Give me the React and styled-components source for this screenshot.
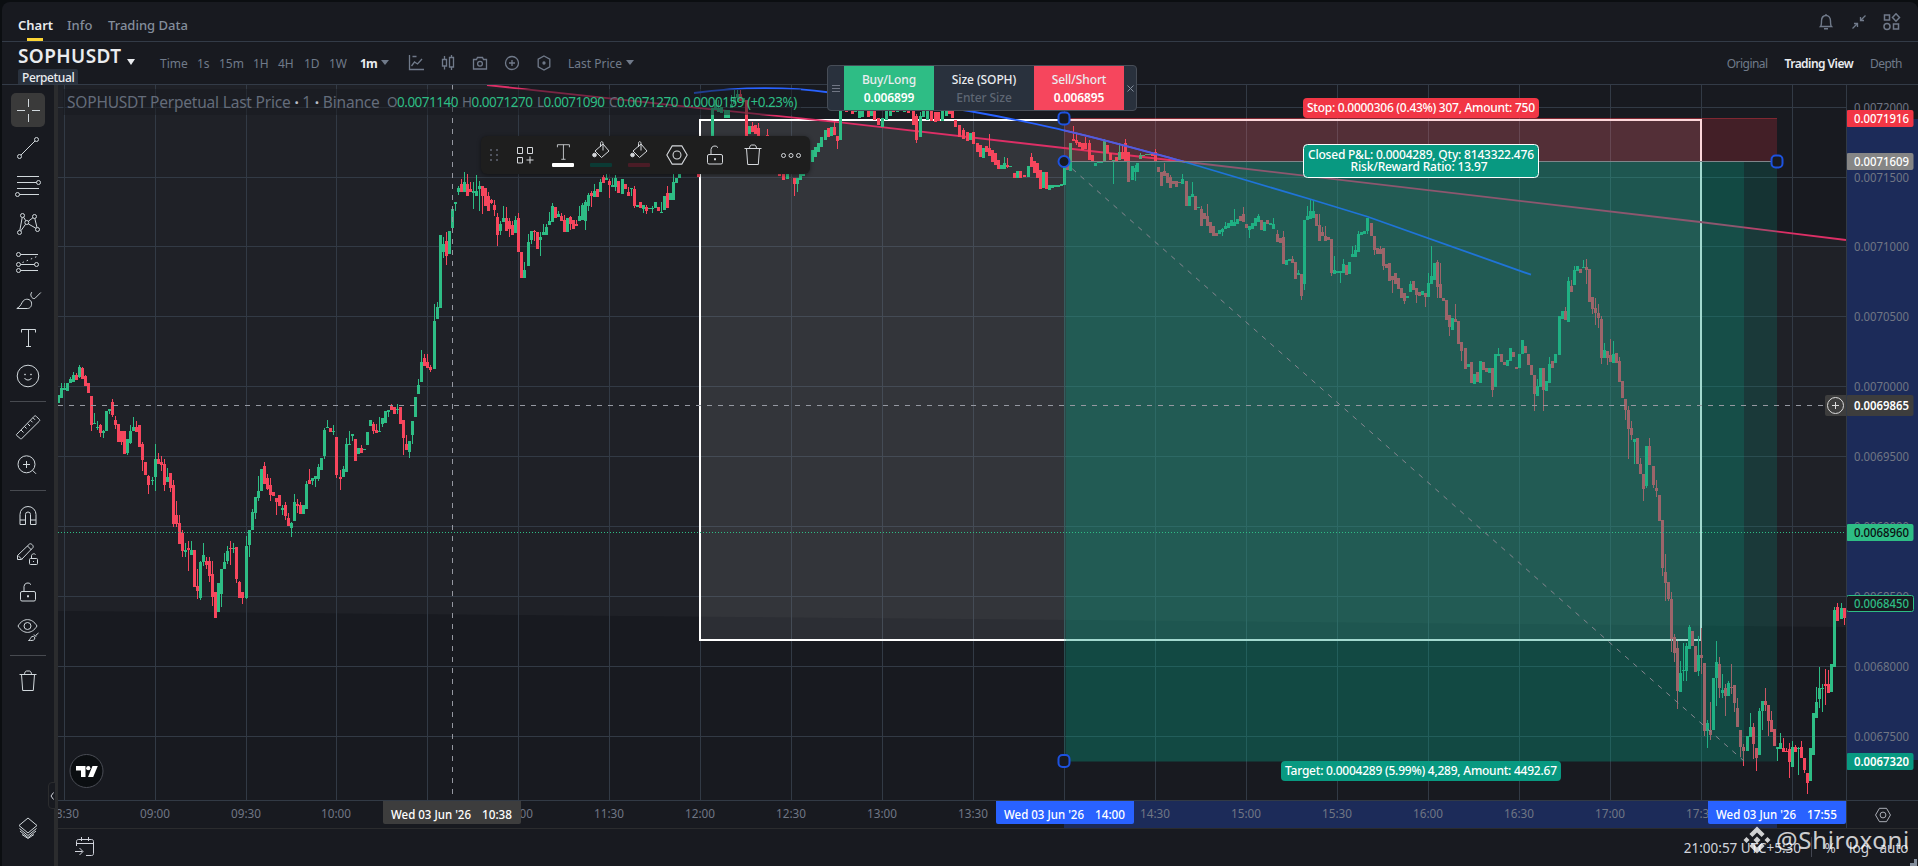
import styled, { createGlobalStyle } from "styled-components";

// x, open, close, high, low (high and low fall back to the body)
const CANDLES = `
58 403 395,61 398 388 383,64 390 388 383,67 391 383,70 383 379 377,73 382 375 372,76 375 380 373,79 377 367 365 378,82 368 379 367,85 376 386 375,
88 383 393,91 396 425 396 431,94 424 423 413,97 428 427 421 430,100 425 433 424 437,103 433 431 430 438,106 431 411,109 411 409 409 414,112 402 415 399 417,115 420 425 416 429,
118 424 442,121 431 442 431 445,124 431 454,127 453 439 439 455,130 443 431 425 444,133 431 427 417,136 427 432 421,139 425 447,142 444 460 442 471,145 462 475,
148 476 485 475 494,152 481 480 477 485,155 477 459 444 491,158 459 464 453,161 462 465 456 471,164 464 485 459 491,167 482 477 468,170 473 488 473 492,173 485 524 480 527,176 515 524 501 527,
179 523 544 515,182 533 551 530 557,185 552 550 543 557,188 548 550 541 571,191 555 550 541,194 550 587,197 586 591 569 599,200 598 562 561 600,203 562 555 543 566,206 561 565 557 569,
209 561 576 557 582,212 574 597 561 606,215 592 618,218 612 583,221 594 569 569 607,224 569 562 553,227 561 551 546 564,230 548 549 541 565,233 549 548 543 553,236 547 579 547 583,
239 582 598 581,242 592 598 592 604,246 598 546 536 599,249 545 530 530 557,252 530 512 509,255 513 497 497 519,258 498 491 476 501,261 491 469,264 466 484 462,267 478 489 474 490,
270 485 495 478 501,273 492 496,276 498 502 498 515,279 495 506,282 510 508 505 515,285 505 516 502 520,288 518 526 513,291 528 523 522 537,294 521 502 494,297 504 506 499 513,
300 505 514 502,303 514 505,306 509 484 481,309 480 484 469,312 481 478 478 485,315 479 476 476 487,318 479 467 464 481,321 470 458,324 456 430 428 459,327 428 427 420,
330 428 432,333 432 431 425 435,336 437 475 437 478,340 477 479 470 490,343 477 469 466,346 472 444 438,349 445 444 431,352 436 434 434 441,355 439 461,358 454 448,
361 448 453 445,364 450 449,367 445 432,370 426 420,373 424 431 422 434,376 430 433 424,379 432 431 417,382 424 418 418 427,385 423 411,388 412 410 410 417,
391 406 410 404,394 407 414,397 410 409 404 414,400 407 424,403 420 438 420 455,406 444 450 435,409 452 441 441 458,412 435 421 421 444,415 417 397,418 394 385 379,
421 382 362 350,424 358 366 354,427 362 368 354,430 367 370 365 372,434 369 321 304,437 319 307 302,440 308 235,443 252 244 237 258,446 241 256 232 265,449 254 231,
452 228 209 209 233,455 204 202 202 211,458 192 188 186 195,461 184 192 179,464 192 182 172,467 184 196 174,470 189 192 182,473 193 191 182 209,476 196 191 175,479 189 186 181 211,
482 186 196 186 214,485 188 206,488 196 211 192,491 200 203 199 204,494 205 210 200 216,497 217 235 213 246,500 231 224 221 235,503 222 218 206,506 218 231 207,509 221 229 218 237,
512 225 235 221,515 233 220 216,518 218 252 213,521 252 278,524 278 270 262,528 266 242 234,531 240 231 231 244,534 231 232 230 241,537 232 249,540 240 237 232 256,
543 235 232 224,546 235 227 224,549 225 221 212,552 222 206 203,555 207 218,558 217 214 211,561 216 221 213,564 220 232 215,567 232 218,570 217 224 216 230,
573 220 229,576 224 226 220,579 221 216 206,582 220 205 203,585 221 202 200 230,588 206 195 193 211,591 193 196 191 207,594 197 191 184,597 189 197,600 192 182 179,
603 177 183 175,606 180 178 173,609 181 185 179 198,612 187 185 178,615 187 178 175 191,618 181 193,622 194 179,625 184 189,628 192 196 187,631 189 188 188 196,
634 189 206 186 208,637 207 205,640 202 208,643 209 205 205 213,646 207 211 205 214,649 209 208,652 209 208 206 213,655 208 202,658 207 211,661 213 212 202,
664 210 196,667 193 208 186,670 200 193,673 200 182 165,676 183 178,679 178 165,698 168 177,
712 150 108,715 110 104 100,718 112 108 100,721 113 107,725 118 110,728 118 110,731 108 104 95,734 104 98 90,737 98 94 90 102,740 94 101 90,743 102 98,746 100 136,749 134 126,752 126 132 122,755 125 134,758 128 136 123,
767 135 150 129,773 158 168,779 166 176,783 172 180,787 179 170,794 178 184 178 196,797 184 178 178 192,800 180 172,803 176 166,807 170 160,812 162 150,815 157 147,818 152 143,821 147 137,825 140 130,828 128 137,831 136 127,834 127 135 122,837 136 141 136 149,840 140 105,
843 111 104,846 100 112,849 104 110,852 104 114,855 112 104,859 118 105,862 117 106,865 104 108,868 106 117,871 116 110,874 108 120,878 118 125,882 127 118,886 120 110,890 116 106,893 104 112,
897 112 104,900 104 110,904 112 104,908 104 113,913 106 125,916 116 140 114 143,920 137 116 112,923 117 109,927 120 111,931 110 121,935 112 122,938 112 121,942 121 110,946 116 108,949 106 114,952 108 118,
955 120 127,959 125 137,963 130 139 128,967 132 141,970 140 133,973 132 144,977 143 152,980 145 157,983 158 148,986 146 152,989 148 156 134,992 150 162,995 153 165,998 160 169,1001 169 165,1004 169 163 157,1007 165 167 158 168,
1010 167 166,1014 173 178,1017 178 171,1020 171 178,1024 175 177,1028 177 166,1031 157 167 153,1034 161 173,1037 163 178,1040 170 189,1043 188 172,1046 172 189,1049 190 185,1052 188 185,1055 187 185,1058 187 185,1061 186 184,
1064 185 165,1067 165 170,1070 171 143,1073 139 141 126,1076 140 143 133 145,1079 142 147,1082 143 150,1085 143 149 137,1089 143 160 140,1092 155 161,1095 166 163,1098 163 161,1101 163 161,1104 162 141 139,1107 145 153,1110 153 160,
1113 162 160 160 184,1116 157 161,1119 160 152 143,1122 152 159 145,1125 143 162 139,1128 152 182,1132 180 166,1135 172 168 165 181,1137 172 163,1140 159 155 153,1143 156 155,1146 155 154,1149 155 154,1152 154 156,1155 152 162 149,
1158 167 172,1161 172 186,1164 171 176 163,1167 173 183,1170 177 188 175,1173 181 184,1176 181 187,1179 182 183,1182 184 179 174,1186 181 206,1189 206 196,1192 197 194 182,1195 196 210,1198 208 207,1201 209 226 206,
1204 213 219,1207 216 226 204,1210 222 233,1213 226 236,1216 233 236,1219 234 230,1222 232 229 228 236,1225 229 226 222,1228 228 223,1231 226 220,1234 226 222 209,1237 224 219,1240 216 221,1243 214 222 207,1246 224 228,
1249 230 226 226 238,1252 229 223,1255 226 218,1258 222 216 214,1261 220 230,1264 231 222,1267 220 224,1270 225 223,1273 229 224 218,1277 234 242 230,1280 238 243,1283 237 264 231,1286 265 260,1289 261 259,1292 259 263 256,
1295 262 279,1298 275 273 270,1301 274 296 274 300,1304 284 220 220 290,1307 220 216 206,1310 219 211 200,1313 218 211 200,1316 214 226,1319 225 241 214,1322 232 236 227,1325 236 241 226,1328 237 240,1331 239 273 239 276,
1334 274 270 256,1337 273 271,1340 273 271 271 283,1343 273 264 259,1346 265 275,1349 274 262,1352 257 254 246,1355 257 250 245,1358 252 234 231,1361 235 232,1364 234 231,1367 231 218 218 234,1371 223 236,
1374 236 250 236 255,1377 248 254,1380 249 254 246,1383 248 266 248 270,1386 264 268,1389 263 281,1392 276 280 276 293,1395 273 284,1398 278 289,1401 288 298,1404 293 301 293 304,1407 298 296,1410 292 284 281,
1413 281 290,1416 288 295 288 303,1419 292 296,1422 295 291,1425 293 297 293 307,1428 297 283 273,1431 284 276 246,1434 280 263,1437 262 287 260 298,1440 284 298 263,1443 298 301,1446 300 320,1449 315 327 315 336,
1452 330 318,1455 319 322 304,1458 321 344,1461 342 351 342 361,1465 348 369,1468 367 364,1471 362 383,1474 384 374,1477 372 382,1480 383 361,1483 362 370,1486 368 372,1489 373 368,1492 368 390 368 397,1495 387 354,
1498 356 354 348,1501 354 362,1504 362 365,1507 366 360,1510 361 348,1513 352 357,1516 367 369,1519 368 354,1522 354 340,1525 346 353,1528 354 365,1531 365 375,1534 375 394 375 411,1537 396 386 379,1540 387 368,
1543 368 390 368 411,1546 391 381,1549 383 364 357,1552 361 368,1555 363 354,1559 355 316,1562 319 311,1565 311 320 307,1568 322 281 277,1571 286 292 280,1574 285 270 266,1577 271 266,1580 269 273,1583 268 267 260,
1586 267 270 259 284,1589 269 302,1592 297 309 297 314,1595 308 313 298 325,1598 313 318 304 328,1601 319 358 316 364,1604 358 350 343,1607 351 358 351 365,1610 355 362 339,1613 363 354 341,1616 353 363,1619 361 382 357,
1622 381 398,1625 399 410 399 420,1628 410 429 406 459,1631 428 435 421 440,1634 442 439 439 464,1637 438 464,1640 464 474 458,1643 474 489 474 501,1646 486 446 446 488,1649 446 465 438,1653 466 485 466 488,
1656 488 491 480 497,1659 495 521,1662 520 568 520 576,1665 572 583 554 601,1668 582 599 582 601,1671 599 639 592 652,1674 637 653 634 662,1677 648 691 641 709,1680 692 673 661,1683 671 670 643 681,1686 671 646 643 681,
1689 649 627 625,1692 631 646,1695 646 672,1698 671 655 636 676,1701 655 658 628 674,1704 663 731 663 736,1707 731 723 720 748,1710 730 735 702 740,1713 730 678,1716 678 662 641 706,1719 664 688 657 698,1722 693 690 674 698,
1725 688 696 684 716,1728 696 683 681,1731 687 688 664 694,1734 685 703 685 712,1737 708 727 698,1740 730 747 730 757,1743 747 751 744 766,1747 751 736,1750 737 727 713,1753 727 744 723 759,1756 748 758 748 771,1759 755 711 708,
1762 711 701 701 730,1765 701 705 688 711,1768 705 721 705 736,1771 720 732 711,1774 729 746,1777 749 747 747 761,1780 749 743 733,1783 748 752 738,1786 751 752 748,1789 749 762 743 778,1792 767 747 741,1795 747 752 745,
1798 749 748 747 775,1801 747 758 741,1804 758 770 758 773,1807 773 783 773 794,1810 781 748,1813 755 713,1816 718 702 687,1819 699 688 667 708,1822 689 688 684 712,1825 684 686 669 705,1828 684 693 670,1831 692 664,
1834 667 610 607,1837 607 621 603,1841 619 608 603,1844 608 618 608 625`
  .trim()
  .replace(/\n/g, "")
  .split(",")
  .map((row) => {
    const [x, open, close, high, low] = row.split(" ").map(Number);
    const top = Math.min(open, close);
    const bottom = Math.max(open, close);
    return { x, top, bottom, high: high ?? top, low: low ?? bottom, up: close < open };
  });

const V_LINES = [64, 155, 246, 336, 427, 518, 609, 700, 791, 882, 973, 1064, 1155, 1246, 1337, 1428, 1519, 1610, 1701, 1792];
const H_LINES = [107, 177, 246, 316, 386, 456, 526, 596, 666, 736];
const PRICES = ["0.0072000", "0.0071500", "0.0071000", "0.0070500", "0.0070000", "0.0069500", "0.0069000", "0.0068500", "0.0068000", "0.0067500"];
const TIMES = ["08:30", "09:00", "09:30", "10:00", "10:30", "11:00", "11:30", "12:00", "12:30", "13:00", "13:30", "14:00", "14:30", "15:00", "15:30", "16:00", "16:30", "17:00", "17:30"];

const TOOLS = [
  ["cross", "trend", "fib", "pattern", "forecast", "brush", "text", "smile"],
  ["ruler", "zoom"],
  ["magnet", "pencil", "lock", "eye"],
  ["trash"],
];

const ICONS = {
  cross: <path d="M3 14.5h8M18 14.5h8M14.5 3v8M14.5 18v8" />,
  trend: (
    <>
      <circle cx="5.5" cy="22.5" r="2" />
      <circle cx="22.5" cy="5.5" r="2" />
      <path d="M7 21L21 7" />
    </>
  ),
  fib: (
    <>
      <path d="M3 4.5h22M3 10.5h19.500M3 16.500h22M5.500 22.500H25" />
      <circle cx="24.5" cy="10.5" r="2" />
      <circle cx="3.5" cy="22.5" r="2" />
    </>
  ),
  pattern: (
    <>
      <circle cx="5.500" cy="22.500" r="2" />
      <circle cx="8.500" cy="5.500" r="2" />
      <circle cx="12.800" cy="12.500" r="2" />
      <circle cx="20.500" cy="6.500" r="2" />
      <circle cx="23.500" cy="19.500" r="2" />
      <path d="M5.800 20.500L8.200 7.500M9.600 7.200l2.200 3.600M14.400 11.200l4.600-3.500M20.800 8.500l2.200 9M14.300 13.900l7.700 4.400M11.600 14.200L6.800 20.900" />
    </>
  ),
  forecast: (
    <>
      <circle cx="4.5" cy="6.5" r="2" />
      <circle cx="4.5" cy="16.5" r="2" />
      <circle cx="22.5" cy="16.5" r="2" />
      <circle cx="4.5" cy="22.5" r="2" />
      <path d="M6.500 6.500H24M6.500 16.500h14M6.500 22.500H24" />
      <path d="M8.500 14.500L23 8.500" strokeDasharray="1.500 3" />
    </>
  ),
  brush: (
    <path d="M2.800 22.500h10.500c3.500 0 5-3.500 4-6.500s-5.500-3.800-8-1.200c-2 2.200-2.500 6-6.500 7.700zM16.800 8c0 3 1.700 5 4 4.500l6-6M17 8c0-1 .5-1.500 1-2" />
  ),
  text: <path d="M7.500 8.500v-3h14v3M14.500 5.500v17M12 22.500h5" />,
  smile: (
    <>
      <circle cx="14" cy="14" r="10.800" />
      <circle cx="11" cy="12.500" r=".5" />
      <circle cx="17" cy="12.500" r=".5" />
      <path d="M10.500 16c1.500 2.700 5.500 2.700 7 0" />
    </>
  ),
  ruler: (
    <path d="M2.500 21.500L20.200 3.300c.7-.7 1.300-.7 2 0l3 3c.7.7.7 1.300 0 2L8 25.300c-.7.7-1.300.7-2 0l-3.500-3c-.4-.4-.4-.5 0-.8zM7 17l2.500 2.500M10.500 13.500L12.500 15.500M13.500 10.500l2.500 2.500M16.500 7.300l2 2M19 4.800l2 2" />
  ),
  zoom: (
    <>
      <circle cx="12.500" cy="13.300" r="8.500" />
      <path d="M18.500 19.300l3.500 3.500M9 13.500h7M12.500 10v7" />
    </>
  ),
  magnet: (
    <path d="M6.500 22.500v-10a8 8 0 0116 0v10h-5.500v-10a2.500 2.500 0 00-5 0v10zM6.500 18h5.500M17 18h5.500" transform="translate(-.5 0)" />
  ),
  pencil: (
    <>
      <path d="M3.500 19.500v-4l12-11.500c1.500-1 4.500 1.500 3.500 3.500L7.500 19.500zM4 15.500l4 4M13.500 6l4 4" />
      <rect x="15.500" y="18.500" width="8" height="6" rx="1" />
      <path d="M17.500 18.500v-2.500c0-2 2.500-3 4-1.500M19.500 21v1" />
    </>
  ),
  lock: (
    <>
      <rect x="6.500" y="13.500" width="15" height="9.500" rx="1.500" />
      <path d="M10 13.500V8.500a3.800 3.800 0 017-1.800M13.500 17.500h1v1.500h-1z" />
    </>
  ),
  eye: (
    <>
      <path d="M4 10c5-8.500 14-8.500 19 0-5 8.500-14 8.500-19 0z" />
      <circle cx="13.500" cy="10" r="3.500" />
      <path d="M14.500 24.500c2-.5 1.500-3 3.500-4 2-.8 3.500 1 2.500 2.800-1 1.500-3.500 1.200-6 1.200zM21.500 19.500l3-2.500M20 18.500c0 1 1 2 2.500 1.500" />
    </>
  ),
  trash: <path d="M5.500 7.500h17M7.500 7.500l1.200 16h10.600l1.200-16M10.500 7.500c0-2 1-3.500 2-3.500h3c1 0 2 1.500 2 3.500" />,
  layers: (
    <path d="M14 4l9 7.500-9 7.500-9-7.500zM5.500 14.500L14 21.500l8.500-7M6 17l8 6.500 8-6.500M8 20.500l6 4 6-4" />
  ),
  hex: (
    <>
      <path d="M9.500 5.500h9l5 8.500-5 8.500h-9L4.500 14z" />
      <circle cx="14" cy="14" r="3.700" />
    </>
  ),
  tiles: (
    <path d="M6.500 6.500h5v6h-5zM16.500 6.500h5v6h-5zM6.500 16.500h5v5.500h-5zM19 15.500v7M15.500 19h7" />
  ),
  dots: (
    <>
      <circle cx="6.500" cy="14.500" r="2" />
      <circle cx="14" cy="14.500" r="2" />
      <circle cx="21.500" cy="14.500" r="2" />
    </>
  ),
  bucket: (
    <>
      <path d="M8 13l8-7 6 7-7.500 6.500zM13.500 9V5.500c0-2.500 2.500-2.500 2.500 0v7" />
      <circle cx="7.500" cy="17" r="1.800" fill="currentColor" />
    </>
  ),
};

function Icon({ name, size = 28 }) {
  return (
    <svg width={size} height={size} viewBox="0 0 28 28" fill="none" stroke="currentColor">
      {ICONS[name]}
    </svg>
  );
}

function Plot() {
  return (
    <PlotSvg width="1788" height="715" viewBox="58 85 1788 715">
      <path d="M58 84H487L700 108L1064 148L1200 163.500L1846 240V627L58 611Z" fill="#fff" fillOpacity=".032" />
      <g stroke="#323a45" shapeRendering="crispEdges">
        {V_LINES.map((x) => (
          <line key={x} x1={x + 0.5} x2={x + 0.5} y1="84" y2="800" />
        ))}
        {H_LINES.map((y) => (
          <line key={y} x1="58" x2="1846" y1={y + 0.5} y2={y + 0.5} />
        ))}
      </g>
      <rect x="700" y="120" width="1001" height="520" fill="#fff" fillOpacity=".09" stroke="#fff" strokeWidth="2" />
      <path d="M487 85L700 108.200L840 122.300L1064 148L1200 163.500L1700 222L1846 240" fill="none" stroke="#dd2f66" strokeWidth="1.800" />
      <g shapeRendering="crispEdges">
        {CANDLES.map((c) => (
          <g key={c.x} fill={c.up ? "#2ebd85" : "#f6465d"}>
            <rect x={c.x} y={c.high} width="1" height={c.low - c.high} />
            <rect x={c.x - 1} y={c.top} width="3" height={c.bottom - c.top} />
          </g>
        ))}
      </g>
      <rect x="1064" y="118" width="713" height="43.500" fill="#f23645" fillOpacity=".2" />
      <path d="M1064 118.500H1777" stroke="#f23645" strokeOpacity=".35" />
      <rect x="1064" y="161.500" width="713" height="600" fill="#089981" fillOpacity=".2" />
      <rect x="1066" y="161.500" width="678" height="600" fill="#089981" fillOpacity=".22" />
      <path
        d="M694 93C740 87 790 87 830 92.500C880 98 920 103 969 111C1020 120 1040 125 1064 130.300C1110 141 1145 151 1185 162"
        fill="none"
        stroke="#2962ff"
        strokeWidth="1.800"
      />
      <path d="M1064 130.300C1110 141 1145 151 1185 162" fill="none" stroke="#5a5ad8" strokeWidth="1.800" />
      <path d="M1185 162L1313 200L1367 216.500L1531 274.700" fill="none" stroke="#1f74d8" strokeWidth="1.800" />
      <path d="M1064 161.500H1777" stroke="#80858a" shapeRendering="crispEdges" />
      <path d="M1064 161.500L1744 761" stroke="#85858f" strokeDasharray="5 6" />
      <path d="M58 532.500H1846" stroke="#2ebd85" strokeDasharray="1 2" shapeRendering="crispEdges" />
      <path d="M58 405.500H1825M452.500 85V800" stroke="#9598a1" strokeDasharray="5 6" shapeRendering="crispEdges" />
      <g fill="#181a20" stroke="#1d52df" strokeWidth="2">
        <rect x="1058.500" y="112.500" width="11" height="12" rx="4" />
        <circle cx="1064" cy="161.500" r="5.500" />
        <rect x="1771.500" y="155.500" width="11" height="12" rx="4" />
        <rect x="1058.500" y="755" width="11" height="12" rx="4" />
      </g>
      <rect x="1303" y="98" width="236" height="20" rx="4" fill="#f23645" />
      <rect x="1303.500" y="144.500" width="235" height="33" rx="4" fill="#089981" stroke="#fff" />
      <rect x="1281" y="761" width="280" height="20" rx="4" fill="#089981" />
      <g fill="#fff" fontSize="12" fontWeight="500" textAnchor="middle">
        <text x="1421" y="112" textLength="228">Stop: 0.0000306 (0.43%) 307, Amount: 750</text>
        <text x="1421" y="159" textLength="226">Closed P&amp;L: 0.0004289, Qty: 8143322.476</text>
        <text x="1419" y="171" textLength="137">Risk/Reward Ratio: 13.97</text>
        <text x="1421" y="775" textLength="272">Target: 0.0004289 (5.99%) 4,289, Amount: 4492.67</text>
      </g>
      <path d="M1827 395H1846V416H1827a2 2 0 01-2-2V397a2 2 0 012-2z" fill="#3d3d3d" />
      <g fill="none" stroke="#dbdbdb">
        <circle cx="1835.500" cy="405.500" r="8" />
        <path d="M1832 405.500h7M1835.500 402v7" />
      </g>
      <circle cx="86.500" cy="771" r="16.500" fill="#0b0e11" stroke="#4a4d55" />
      <g fill="#fff">
        <path d="M76 766h9.500v11h-4.500v-6.500H76z" />
        <circle cx="88.300" cy="768.200" r="2.100" />
        <path d="M92.500 766h5.300l-4.600 11H88z" />
      </g>
    </PlotSvg>
  );
}

function PriceTag({ y, h = 17, fill, stroke, color = "#fff", weight = 500, children }) {
  return (
    <>
      <rect x="1846.500" y={y} width="67" height={h} rx="2" fill={fill} stroke={stroke} />
      <text x="1854" y={y + h / 2 + 4.500} textLength="55" lengthAdjust="spacingAndGlyphs" fill={color} fontWeight={weight}>
        {children}
      </text>
    </>
  );
}

function PriceScale() {
  return (
    <PlotSvg width="71" height="715" viewBox="1847 85 71 715" fontSize="12.500">
      <rect x="1847" y="119" width="71" height="641" fill="#1c2b59" />
      {PRICES.map((p, i) => (
        <text key={p} x="1854" y={H_LINES[i] + 4.500} textLength="55" lengthAdjust="spacingAndGlyphs" fill="#707684">
          {p}
        </text>
      ))}
      <PriceTag y={110} fill="#f23645">0.0071916</PriceTag>
      <PriceTag y={153} fill="#858585">0.0071609</PriceTag>
      <PriceTag y={395} h={21} fill="#3d3d3d" weight={600}>0.0069865</PriceTag>
      <PriceTag y={524} fill="#2ebd85" color="#0b0e11">0.0068960</PriceTag>
      <PriceTag y={595.5} h={16} fill="#181a20" stroke="#2ebd85" color="#2ebd85">0.0068450</PriceTag>
      <PriceTag y={753} fill="#089981" weight={600}>0.0067320</PriceTag>
    </PlotSvg>
  );
}

function TimeTag({ x, fill, time }) {
  return (
    <>
      <rect x={x} y="798" width="138" height="26" rx="2" fill={fill} />
      <g fill="#fff" fontWeight="500">
        <text x={x + 8} y="819" textLength="80" lengthAdjust="spacingAndGlyphs">Wed 03 Jun &#39;26</text>
        <text x={x + 99} y="819" textLength="30" lengthAdjust="spacingAndGlyphs">{time}</text>
      </g>
    </>
  );
}

function TimeScale() {
  return (
    <PlotSvg width="1788" height="27" viewBox="58 801 1788 27" fontSize="12.500">
      <rect x="1064" y="801" width="713" height="27" fill="#1c2b59" />
      {TIMES.map((t, i) => (
        <text key={t} x={V_LINES[i]} y="818" textAnchor="middle" textLength="30" lengthAdjust="spacingAndGlyphs" fill="#707684">
          {t}
        </text>
      ))}
      <TimeTag x={383} fill="#3d3d3d" time="10:38" />
      <TimeTag x={996} fill="#2962ff" time="14:00" />
      <TimeTag x={1708} fill="#2962ff" time="17:55" />
    </PlotSvg>
  );
}

function App() {
  return (
    <Page>
      <GlobalStyle />
      <Tabs>
        <Tab $active $w={49}>Chart</Tab>
        <Tab $w={41}>Info</Tab>
        <Tab>Trading Data</Tab>
        <TopIcons>
          <svg width="16" height="18" viewBox="0 0 16 18" fill="none" stroke="currentColor" strokeWidth="1.400">
            <path d="M2.500 13.500c1-1 1-2 1-5.500 0-3.500 2-5.500 4.500-5.500s4.500 2 4.500 5.500 0 4.500 1 5.500zM6 15.800h4M8 1v1.500" />
          </svg>
          <svg width="16" height="16" viewBox="0 0 16 16" fill="none" stroke="currentColor" strokeWidth="1.300">
            <path d="M14.500 1.500L9.500 6.500M9.500 3v3.500H13M1.500 14.500l5-5M3 9.500h3.500V13" />
          </svg>
          <svg width="18" height="18" viewBox="0 0 18 18" fill="none" stroke="currentColor" strokeWidth="1.500">
            <rect x="1.500" y="2" width="5" height="5" />
            <path d="M13 .8l3.500 3.700L13 8.200 9.500 4.500z" />
            <circle cx="4" cy="13.500" r="3" />
            <rect x="10.500" y="11" width="5" height="5" />
          </svg>
        </TopIcons>
      </Tabs>

      <Header>
        <Pair>
          <Symbol>SOPHUSDT<Arrow $big /></Symbol>
          <Perpetual>Perpetual</Perpetual>
        </Pair>
        <Interval $w={37}>Time</Interval>
        <Interval $w={22}>1s</Interval>
        <Interval $w={34}>15m</Interval>
        <Interval $w={25}>1H</Interval>
        <Interval $w={26}>4H</Interval>
        <Interval $w={25}>1D</Interval>
        <Interval $w={31}>1W</Interval>
        <Interval $w={48} $active>1m<Arrow /></Interval>
        <HeaderIcons>
          <svg viewBox="0 0 16 16"><path d="M1.500 0v14.500H16M3.500 11l3-4 3 2 4.500-5M4.500 1.500h4" /></svg>
          <svg viewBox="0 0 16 16"><path d="M4.500 1v3M4.500 11v3.500M11.500 0v2.500M11.500 12v3M2.500 4.500h4v6.500h-4zM9.500 2.500h4V12h-4z" /></svg>
          <svg viewBox="0 0 16 16"><path d="M1.500 4.500h3l1-2h5l1 2h3v9.500h-13z" /><circle cx="8" cy="8.800" r="2.400" /></svg>
          <svg viewBox="0 0 16 16"><circle cx="8" cy="8" r="6.500" /><path d="M8 5v6M5 8h6" /></svg>
          <svg viewBox="0 0 16 16"><path d="M8 1l5.800 3.200v7.600L8 15l-5.800-3.200V4.200z" /><circle cx="8" cy="8" r="1" fill="currentColor" /></svg>
        </HeaderIcons>
        <Interval>Last Price<Arrow /></Interval>
        <Views>
          <View>Original</View>
          <View $active>Trading View</View>
          <View>Depth</View>
        </Views>
      </Header>

      <Body>
        <Sidebar>
          {TOOLS.map((group) => (
            <ToolGroup key={group[0]}>
              {group.map((name) => (
                <Tool key={name} $active={name === "cross"}>
                  <Icon name={name} />
                </Tool>
              ))}
            </ToolGroup>
          ))}
          <BottomTool>
            <Icon name="layers" />
          </BottomTool>
          <Collapse>
            <svg width="6" height="10" viewBox="0 0 6 10" fill="none" stroke="#d1d4dc"><path d="M4.500 1.500L2 5l2.500 3.500" /></svg>
          </Collapse>
        </Sidebar>

        <Workspace>
          <ChartRow>
            <Plot />
            <Scale>
              <PriceScale />
            </Scale>
            <Legend>
              <LegendTitle>SOPHUSDT Perpetual Last Price <b>·</b> 1 <b>·</b> Binance</LegendTitle>
              <Ohlc $w={75}>O<i>0.0071140</i></Ohlc>
              <Ohlc $w={75}>H<i>0.0071270</i></Ohlc>
              <Ohlc $w={72}>L<i>0.0071090</i></Ohlc>
              <Ohlc $w={74}>C<i>0.0071270</i></Ohlc>
              <Ohlc><i>0.0000159 (+0.23%)</i></Ohlc>
            </Legend>
            <DrawBar>
              <Grip>
                <svg width="8" height="14" viewBox="0 0 8 14" fill="#50535e">
                  <path d="M0 1h2v2H0zM6 1h2v2H6zM0 6h2v2H0zM6 6h2v2H6zM0 11h2v2H0zM6 11h2v2H6z" />
                </svg>
              </Grip>
              <DrawTool><Icon name="tiles" /></DrawTool>
              <DrawTool $raised $line="#fff"><Icon name="text" size={24} /></DrawTool>
              <DrawTool $raised $line="#0b3a34"><Icon name="bucket" /></DrawTool>
              <DrawTool $raised $line="#4a1c26"><Icon name="bucket" /></DrawTool>
              <DrawTool><Icon name="hex" size={30} /></DrawTool>
              <DrawTool><Icon name="lock" /></DrawTool>
              <DrawTool><Icon name="trash" /></DrawTool>
              <DrawTool><Icon name="dots" /></DrawTool>
            </DrawBar>
            <OrderBox>
              <OrderEdge $w={16}>
                <svg width="8" height="9" viewBox="0 0 8 9" stroke="#707684"><path d="M0 1.500h8M0 4.500h8M0 7.500h8" /></svg>
              </OrderEdge>
              <OrderCell $w={90} $bg="#2ebd85">Buy/Long<b>0.006899</b></OrderCell>
              <OrderCell $w={100}>Size (SOPH)<span>Enter Size</span></OrderCell>
              <OrderCell $w={90} $bg="#f6465d">Sell/Short<b>0.006895</b></OrderCell>
              <OrderEdge $w={12}>
                <svg width="7" height="7" viewBox="0 0 7 7" stroke="#848e9c"><path d="M.5.5l6 6M6.500.5l-6 6" /></svg>
              </OrderEdge>
            </OrderBox>
          </ChartRow>

          <TimeRow>
            <TimeScale />
            <ScaleCorner>
              <Icon name="hex" size={22} />
            </ScaleCorner>
          </TimeRow>

          <Footer>
            <svg width="20" height="20" viewBox="0 0 20 20" fill="none" stroke="#d1d4dc">
              <path d="M1.500 9V4.500c0-1 .5-2 2-2h13c1.500 0 2 1 2 2v12c0 1-.5 2-2 2H11M1.500 6.500h17M6.500 0v4M13.500 0v4M0 14.500h7.500M4.500 11l3.500 3.500L4.500 18" />
            </svg>
            <Clock>21:00:57 UTC+5:30</Clock>
            <Mode $w={36}>%</Mode>
            <Mode $w={22}>log</Mode>
            <Mode $w={48}>auto</Mode>
          </Footer>
        </Workspace>
      </Body>

      <Watermark>
        <svg width="28" height="28" viewBox="0 0 28 28" fill="currentColor">
          <path d="M14 .5l7.600 7.600-3 3L14 6.500l-4.600 4.600-3-3zM14 27.500l7.600-7.600-3-3L14 21.500l-4.600-4.600-3 3zM3.500 11l3 3-3 3-3-3zM24.500 11l3 3-3 3-3-3zM14 10.500l3.500 3.500-3.500 3.500-3.500-3.500z" />
        </svg>
        @Shiroxoni
      </Watermark>
      <Resize />
    </Page>
  );
}

export default App;

const GlobalStyle = createGlobalStyle`
  body {
    margin: 0;
    background: #0b0e11;
    overflow: hidden;
  }
  * {
    box-sizing: border-box;
  }
  svg {
    display: block;
    flex: none;
  }
`;

const Page = styled.div`
  position: relative;
  display: flex;
  flex-direction: column;
  width: 1918px;
  height: 866px;
  padding: 2px 0 0 2px;
  background: #0b0e11;
  font-family: "Noto Sans", "Open Sans", sans-serif;
  white-space: nowrap;
`;

const Tabs = styled.div`
  display: flex;
  align-items: center;
  height: 40px;
  flex: none;
  padding: 0 17px 0 16px;
  background: #181a20;
  border-bottom: 1px solid #333b47;
  border-radius: 8px 8px 0 0;
`;

const Tab = styled.div`
  position: relative;
  width: ${(p) => (p.$w ? `${p.$w}px` : "auto")};
  height: 39px;
  padding-top: 4px;
  line-height: 39px;
  font-size: 13px;
  font-weight: ${(p) => (p.$active ? 600 : 500)};
  color: ${(p) => (p.$active ? "#eaecef" : "#848e9c")};

  &::after {
    content: "";
    display: ${(p) => (p.$active ? "block" : "none")};
    position: absolute;
    left: 9px;
    bottom: 0;
    width: 16px;
    height: 3px;
    background: #fcd535;
  }
`;

const TopIcons = styled.div`
  display: flex;
  align-items: center;
  gap: 16.5px;
  margin-left: auto;
  color: #707a8a;
`;

const Header = styled.div`
  display: flex;
  align-items: center;
  height: 43px;
  flex: none;
  padding: 0 16px;
  background: #181a20;
  border-bottom: 1px solid #333b47;
`;

const Pair = styled.div`
  display: flex;
  flex-direction: column;
  justify-content: flex-end;
  align-items: flex-start;
  width: 142px;
  height: 42px;
`;

const Symbol = styled.div`
  display: flex;
  align-items: center;
  height: 25px;
  line-height: 25px;
  font-size: 19px;
  font-weight: 600;
  letter-spacing: 0.4px;
  color: #eaecef;
`;

const Perpetual = styled.div`
  height: 15px;
  padding: 0 4px;
  line-height: 17px;
  font-size: 12px;
  font-weight: 500;
  letter-spacing: -0.4px;
  color: #eaecef;
  background: #29313d;
  border-radius: 2px 2px 0 0;
`;

const Arrow = styled.i`
  width: 0;
  height: 0;
  margin: ${(p) => (p.$big ? "10px 0 0 6px" : "0 0 2px 4px")};
  border: ${(p) => (p.$big ? 4.5 : 4)}px solid transparent;
  border-top: ${(p) => (p.$big ? 6 : 5)}px solid currentColor;
  border-bottom: 0;
`;

const Interval = styled.div`
  display: flex;
  align-items: center;
  width: ${(p) => (p.$w ? `${p.$w}px` : "auto")};
  padding-top: 1px;
  font-size: 12px;
  font-weight: ${(p) => (p.$active ? 700 : 400)};
  letter-spacing: ${(p) => (p.$active ? -0.8 : 0)}px;
  color: ${(p) => (p.$active ? "#eaecef" : "#707a8a")};

  ${Arrow} {
    color: #707a8a;
  }
`;

const HeaderIcons = styled.div`
  display: flex;
  gap: 16px;
  margin-right: 16px;
  color: #707a8a;

  svg {
    width: 16px;
    height: 16px;
    fill: none;
    stroke: currentColor;
    stroke-width: 1.3;
  }
`;

const Views = styled.div`
  display: flex;
  gap: 17px;
  margin-left: auto;
`;

const View = styled.div`
  padding-top: 1px;
  font-size: 12px;
  font-weight: ${(p) => (p.$active ? 600 : 400)};
  letter-spacing: -0.55px;
  color: ${(p) => (p.$active ? "#eaecef" : "#707a8a")};
`;

const Body = styled.div`
  display: flex;
  flex: 1;
  min-height: 0;
  background: #181a20;
`;

const Sidebar = styled.div`
  position: relative;
  display: flex;
  flex-direction: column;
  width: 56px;
  flex: none;
  padding-top: 6px;
  color: #d1d8dc;
  border-right: 4px solid #2b2c2e;
`;

const ToolGroup = styled.div`
  display: flex;
  flex-direction: column;
  align-items: center;

  & + & {
    margin-top: 6px;
    padding-top: 6px;
    background: linear-gradient(#474a50, #474a50) center top / 36px 1px no-repeat;
  }

  & + &::before {
    content: "";
    height: 1px;
  }
`;

const Tool = styled.div`
  display: flex;
  align-items: center;
  justify-content: center;
  width: 34px;
  height: 34px;
  margin: 2px 0;
  border-radius: 5px;
  background: ${(p) => (p.$active ? "#3a3a3a" : "transparent")};
`;

const BottomTool = styled.div`
  display: flex;
  justify-content: center;
  margin: auto 0 24px;
`;

const Collapse = styled.div`
  position: absolute;
  right: -2px;
  top: 697px;
  display: flex;
  align-items: center;
  justify-content: center;
  width: 8px;
  height: 27px;
  background: #181a20;
  border: 1px solid #2b2c2e;
  border-radius: 4px 0 0 4px;
`;

const Workspace = styled.div`
  display: flex;
  flex-direction: column;
  flex: 1;
`;

const ChartRow = styled.div`
  position: relative;
  display: flex;
  height: 715px;
`;

const PlotSvg = styled.svg`
  font-family: "Noto Sans", "Open Sans", sans-serif;
`;

const Scale = styled.div`
  width: 72px;
  border-left: 1px solid #323a45;
`;

const Legend = styled.div`
  position: absolute;
  left: 5px;
  top: 4px;
  display: flex;
  align-items: center;
  height: 26px;
  padding: 0 4px;
  background: rgba(24, 26, 32, 0.5);
`;

const LegendTitle = styled.div`
  width: 320px;
  font-size: 15.5px;
  letter-spacing: -0.2px;
  color: #646c7a;

  b {
    color: #b7bdc6;
  }
`;

const Ohlc = styled.div`
  width: ${(p) => (p.$w ? `${p.$w}px` : "auto")};
  font-size: 13.5px;
  letter-spacing: -0.5px;
  color: #646c7a;

  i {
    font-style: normal;
    color: #2ebd85;
  }
`;

const DrawBar = styled.div`
  position: absolute;
  left: 423px;
  top: 51px;
  display: flex;
  height: 38px;
  background: #1e1e1e;
  border-radius: 6px;
  box-shadow: 0 1px 4px rgba(0, 0, 0, 0.45);
`;

const Grip = styled.div`
  display: flex;
  align-items: center;
  justify-content: center;
  width: 25px;
`;

const DrawTool = styled.div`
  position: relative;
  display: flex;
  align-items: center;
  justify-content: center;
  width: 38px;
  padding-bottom: ${(p) => (p.$raised ? 7 : 0)}px;
  color: #d5d8dc;

  &::after {
    content: "";
    position: absolute;
    left: 8px;
    bottom: 7px;
    width: 22px;
    height: 4px;
    border-radius: 1px;
    background: ${(p) => p.$line || "transparent"};
  }
`;

const OrderBox = styled.div`
  position: absolute;
  left: 769px;
  top: -20px;
  display: flex;
  height: 46px;
  background: #29313d;
  border: 1px solid #474d57;
  border-radius: 4px;
`;

const OrderEdge = styled.div`
  display: flex;
  align-items: center;
  justify-content: center;
  width: ${(p) => p.$w}px;
`;

const OrderCell = styled.div`
  display: flex;
  flex-direction: column;
  align-items: center;
  justify-content: center;
  width: ${(p) => p.$w}px;
  padding-top: 2px;
  line-height: 18px;
  font-size: 12px;
  font-weight: 500;
  letter-spacing: -0.1px;
  color: #eaecef;
  background: ${(p) => p.$bg || "transparent"};

  b {
    font-weight: 600;
    color: #fff;
  }

  span {
    color: #5e6673;
  }
`;

const TimeRow = styled.div`
  display: flex;
  height: 28px;
  border-top: 1px solid #323a45;
`;

const ScaleCorner = styled.div`
  display: flex;
  align-items: center;
  justify-content: center;
  width: 72px;
  color: #d1d4dc;
  border-left: 1px solid #323a45;
`;

const Footer = styled.div`
  display: flex;
  align-items: center;
  flex: 1;
  padding: 0 0 1px 17px;
  border-top: 1px solid #2b2c2e;
  color: #d1d4dc;
`;

const Clock = styled.div`
  margin-left: auto;
  padding: 2px 10px 0 0;
  font-size: 13.5px;
  border-right: 1px solid #434651;
`;

const Mode = styled.div`
  width: ${(p) => p.$w}px;
  padding-top: 2px;
  text-align: center;
  font-size: 13.5px;
`;

const Watermark = styled.div`
  position: absolute;
  right: 8px;
  bottom: 9px;
  display: flex;
  align-items: center;
  gap: 5px;
  height: 34px;
  line-height: 30px;
  padding-bottom: 1px;
  font-size: 24px;
  letter-spacing: 0.7px;
  color: rgba(255, 255, 255, 0.8);
`;

const Resize = styled.div`
  position: absolute;
  right: 1px;
  bottom: 0;
  width: 7px;
  height: 7px;
  border-right: 3px solid #848e9c;
  border-bottom: 3px solid #848e9c;
`;
